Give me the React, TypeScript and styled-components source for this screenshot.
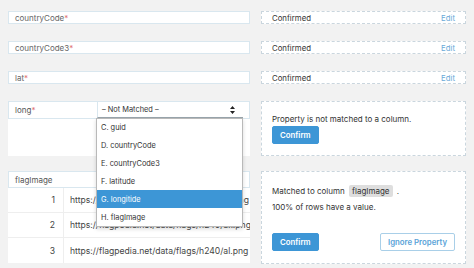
import { createGlobalStyle, styled } from "styled-components";

const GlobalStyle = createGlobalStyle`
  html, body {
    margin: 0;
    padding: 0;
    background: #f2f2f2;
    font-family: Inter, "Noto Sans", sans-serif;
    font-size: 8px;
    color: #333;
  }
`;

const Page = styled.div`
  display: flex;
  flex-direction: column;
  gap: 17px;
  padding: 11px 8px 0 8px;
  height: 268px;
  box-sizing: border-box;
  overflow: hidden;
`;

const Row = styled.div<{ $top?: number }>`
  display: grid;
  grid-template-columns: 242px 205px;
  column-gap: 11px;
  align-items: start;
  margin-top: ${(p) => p.$top ?? 0}px;
`;

const FieldBox = styled.div`
  height: 13px;
  box-sizing: border-box;
  border: 1px solid #d9e7ef;
  background: #fff;
  padding: 0 6px;
  display: flex;
  align-items: center;
  color: #666;
  font-size: 8px;
`;

const Req = styled.span`
  color: #e07070;
`;

const StatusBox = styled.div`
  height: 13px;
  box-sizing: border-box;
  border: 1px dashed #cad6de;
  background: #fff;
  padding: 0 10px;
  display: flex;
  align-items: center;
  justify-content: space-between;
  color: #333;
  font-size: 7.8px;
`;

const EditLink = styled.span`
  color: #6aaad8;
`;

const FieldCard = styled.div`
  position: relative;
  background: #fff;
  display: flex;
  flex-direction: column;
`;

const FieldHeader = styled.div<{ $h: number }>`
  height: ${(p) => p.$h}px;
  box-sizing: border-box;
  border: 1px solid #d9e7ef;
  display: flex;
  align-items: center;
  color: #555;
  font-size: 8px;
`;

const Label = styled.div`
  width: 88px;
  padding-left: 6px;
  box-sizing: border-box;
`;

const SelectBox = styled.div`
  flex: 1;
  height: 100%;
  margin-right: 6px;
  box-sizing: border-box;
  border-left: 1px solid #d9e7ef;
  border-bottom: 1px solid #9aa6ad;
  display: flex;
  align-items: center;
  justify-content: space-between;
  padding: 0 8px 0 4px;
  color: #333;
  font-size: 7.4px;
`;

const FieldBody = styled.div`
  height: 37px;
`;

const Dropdown = styled.div`
  position: absolute;
  left: 88px;
  top: 17px;
  width: 147px;
  height: 109px;
  overflow: hidden;
  background: #fff;
  border: 1px solid #b9b9b9;
  box-shadow: 0 2px 4px rgba(0, 0, 0, 0.15);
  box-sizing: border-box;
  z-index: 2;
`;

const Options = styled.div`
  margin-top: -1px;
`;

const Option = styled.div<{ $active?: boolean }>`
  height: 18px;
  display: flex;
  align-items: center;
  padding-left: 4px;
  font-size: 7.4px;
  background: ${(p) => (p.$active ? "#3d96d6" : "#fff")};
  color: ${(p) => (p.$active ? "#fff" : "#333")};
`;

const Table = styled.div`
  display: flex;
  flex-direction: column;
`;

const TableRow = styled.div`
  display: grid;
  grid-template-columns: 56px 1fr;
  height: 25px;
  border-bottom: 1px solid #eee;
  box-sizing: border-box;
  font-size: 8.6px;
  &:last-child {
    border-bottom: none;
  }
`;

const IndexCell = styled.div`
  display: flex;
  align-items: center;
  justify-content: flex-end;
  padding-right: 8px;
  border-right: 1px solid #eee;
  color: #444;
`;

const UrlCell = styled.div`
  display: flex;
  align-items: center;
  padding-left: 6px;
  white-space: nowrap;
  overflow: hidden;
  color: #444;
`;

const ActionCard = styled.div<{ $h: number; $pad: number }>`
  height: ${(p) => p.$h}px;
  box-sizing: border-box;
  border: 1px dashed #cad6de;
  background: #fff;
  padding: ${(p) => p.$pad}px 10px 0 10px;
  display: flex;
  flex-direction: column;
  font-size: 8px;
`;

const Text = styled.div<{ $lh?: number }>`
  line-height: ${(p) => p.$lh ?? 16}px;
  color: #333;
`;

const Tag = styled.span`
  display: inline-block;
  background: #dedede;
  border-radius: 2px;
  padding: 0 3px;
  line-height: 12px;
  margin: 0 2px;
`;

const ButtonRow = styled.div`
  display: flex;
  justify-content: space-between;
  align-items: center;
  margin-top: 18px;
`;

const Button = styled.button<{ $outline?: boolean; $top?: number }>`
  font-family: inherit;
  font-size: 7.8px;
  font-weight: 600;
  height: 18px;
  padding: 0 7px;
  margin-top: ${(p) => p.$top ?? 0}px;
  border-radius: 2px;
  cursor: pointer;
  align-self: flex-start;
  background: ${(p) => (p.$outline ? "#fff" : "#3d96d6")};
  color: ${(p) => (p.$outline ? "#5aa3d8" : "#fff")};
  border: 1px solid ${(p) => (p.$outline ? "#a9cfe8" : "#3d96d6")};
`;

const Arrows = () => (
  <svg width="5" height="8" viewBox="0 0 5 8">
    <path d="M2.5 0 L5 3 L0 3 Z M2.5 8 L5 5 L0 5 Z" fill="#222" />
  </svg>
);

const confirmed = ["countryCode", "countryCode3", "lat"];
const options = [
  "C. guid",
  "D. countryCode",
  "E. countryCode3",
  "F. latitude",
  "G. longitide",
  "H. flagImage",
];
const urls = [
  "https://flagpedia.net/data/flags/h240/af.png",
  "https://flagpedia.net/data/flags/h240/ax.png",
  "https://flagpedia.net/data/flags/h240/al.png",
];

export default function App() {
  return (
    <>
      <GlobalStyle />
      <Page>
        {confirmed.map((name) => (
          <Row key={name}>
            <FieldBox>
              {name}
              <Req>*</Req>
            </FieldBox>
            <StatusBox>
              <span>Confirmed</span>
              <EditLink>Edit</EditLink>
            </StatusBox>
          </Row>
        ))}
        <Row>
          <FieldCard>
            <FieldHeader $h={18}>
              <Label>
                long<Req>*</Req>
              </Label>
              <SelectBox>
                <span>– Not Matched –</span>
                <Arrows />
              </SelectBox>
            </FieldHeader>
            <FieldBody />
            <Dropdown>
              <Options>
                {options.map((o) => (
                  <Option key={o} $active={o.startsWith("G.")}>
                    {o}
                  </Option>
                ))}
              </Options>
            </Dropdown>
          </FieldCard>
          <ActionCard $h={55} $pad={11}>
            <Text $lh={13}>Property is not matched to a column.</Text>
            <Button>Confirm</Button>
          </ActionCard>
        </Row>
        <Row $top={-2}>
          <FieldCard>
            <FieldHeader $h={17}>
              <Label>flagImage</Label>
            </FieldHeader>
            <Table>
              {urls.map((u, i) => (
                <TableRow key={u}>
                  <IndexCell>{i + 1}</IndexCell>
                  <UrlCell>{u}</UrlCell>
                </TableRow>
              ))}
            </Table>
          </FieldCard>
          <ActionCard $h={93} $pad={11}>
            <Text>
              Matched to column <Tag>flagImage</Tag> .
            </Text>
            <Text>100% of rows have a value.</Text>
            <ButtonRow>
              <Button>Confirm</Button>
              <Button $outline>Ignore Property</Button>
            </ButtonRow>
          </ActionCard>
        </Row>
      </Page>
    </>
  );
}
